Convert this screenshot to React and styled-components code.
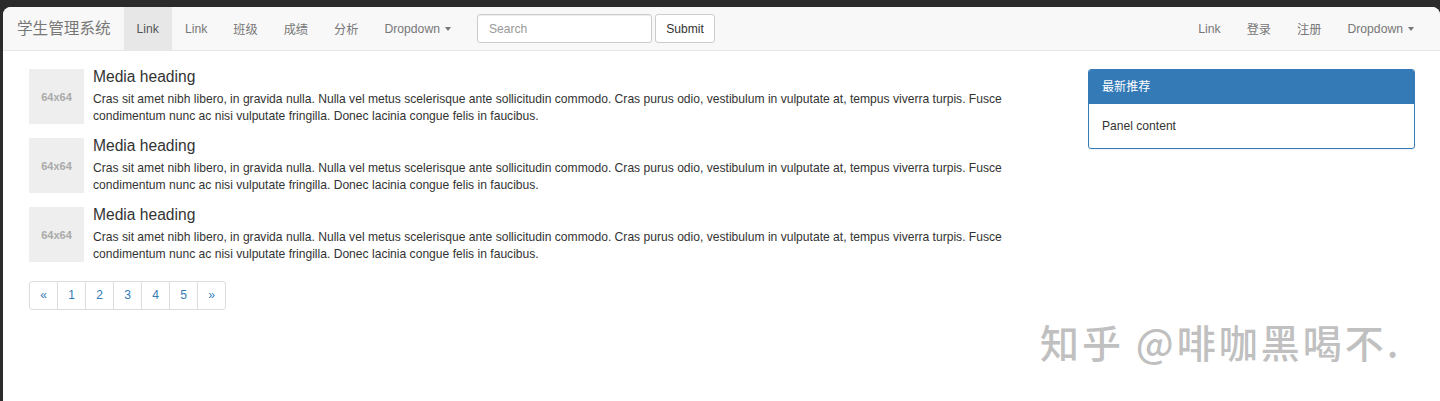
import { createGlobalStyle, styled } from "styled-components";

const GlobalStyle = createGlobalStyle`
    html, body {
        margin: 0;
        padding: 0;
        background: #2b2b2b;
        height: 401px;
        overflow: hidden;
    }
    * {
        box-sizing: border-box;
    }
`

const FONT = `"Liberation Sans", Arial, "Noto Sans CJK SC", sans-serif`

const leftLinks = [
    { label: 'Link', active: true },
    { label: 'Link' },
    { label: '班级' },
    { label: '成绩' },
    { label: '分析' },
]

const rightLinks = ['Link', '登录', '注册']

const mediaItems = [1, 2, 3]

const pages = ['«', '1', '2', '3', '4', '5', '»']

export default function App() {
    return (
        <Frame>
            <GlobalStyle />
            <Window>
                <Navbar>
                    <Brand>学生管理系统</Brand>
                    <NavList>
                        {leftLinks.map((item, i) => (
                            <NavItem key={i} $active={item.active}>{item.label}</NavItem>
                        ))}
                        <NavItem>Dropdown <Caret /></NavItem>
                    </NavList>
                    <SearchForm>
                        <SearchInput placeholder="Search" />
                        <SubmitButton type="button">Submit</SubmitButton>
                    </SearchForm>
                    <NavList $right>
                        {rightLinks.map(label => <NavItem key={label}>{label}</NavItem>)}
                        <NavItem>Dropdown <Caret /></NavItem>
                    </NavList>
                </Navbar>
                <Content>
                    <MainColumn>
                        {mediaItems.map(n => (
                            <Media key={n}>
                                <Thumb>64x64</Thumb>
                                <MediaBody>
                                    <MediaHeading>Media heading</MediaHeading>
                                    <p>Cras sit amet nibh libero, in gravida nulla. Nulla vel metus scelerisque ante sollicitudin commodo. Cras purus odio, vestibulum in vulputate at, tempus viverra turpis. Fusce condimentum nunc ac nisi vulputate fringilla. Donec lacinia congue felis in faucibus.</p>
                                </MediaBody>
                            </Media>
                        ))}
                        <Pagination>
                            {pages.map((p, i) => (
                                <PageLink key={i} $first={i === 0} $last={i === pages.length - 1}>{p}</PageLink>
                            ))}
                        </Pagination>
                    </MainColumn>
                    <SideColumn>
                        <Panel>
                            <PanelHeading>最新推荐</PanelHeading>
                            <PanelBody>Panel content</PanelBody>
                        </Panel>
                    </SideColumn>
                </Content>
                <Watermark>知乎 @啡咖黑喝不.</Watermark>
            </Window>
        </Frame>
    )
}

const Frame = styled.div`
    height: 401px;
    padding: 7px 0 0 3px;
    font-family: ${FONT};
`

const Window = styled.div`
    position: relative;
    height: 100%;
    background: #ffffff;
    border-radius: 8px 8px 0 0;
    overflow: hidden;
`

const Navbar = styled.nav`
    display: flex;
    align-items: center;
    height: 44px;
    background: #f8f8f8;
    border-bottom: 1px solid #e7e7e7;
    padding: 0 13px 0 0;
`

const Brand = styled.div`
    padding: 0 13px 0 14px;
    font-size: 15.6px;
    line-height: 43px;
    color: #777777;
`

const NavList = styled.ul`
    display: flex;
    list-style: none;
    margin: 0;
    padding: 0;
    margin-left: ${p => p.$right ? 'auto' : '0'};
`

const NavItem = styled.li`
    display: flex;
    align-items: center;
    gap: 5px;
    height: 43px;
    padding: 0 13px;
    font-size: 12.2px;
    color: ${p => p.$active ? '#555555' : '#777777'};
    background: ${p => p.$active ? '#e7e7e7' : 'transparent'};
`

const Caret = styled.span`
    display: inline-block;
    width: 0;
    height: 0;
    border-top: 4px solid #777777;
    border-left: 3.5px solid transparent;
    border-right: 3.5px solid transparent;
`

const SearchForm = styled.form`
    display: flex;
    gap: 3px;
    margin: 0;
    padding: 0 13px;
`

const SearchInput = styled.input`
    width: 175px;
    height: 29px;
    padding: 5px 11px;
    font-family: ${FONT};
    font-size: 12.1px;
    color: #555555;
    border: 1px solid #cccccc;
    border-radius: 3px;
    box-shadow: inset 0 1px 1px rgba(0, 0, 0, 0.075);
    &::placeholder {
        color: #999999;
    }
`

const SubmitButton = styled.button`
    width: 60px;
    height: 29px;
    font-family: ${FONT};
    font-size: 12.1px;
    color: #333333;
    background: #ffffff;
    border: 1px solid #cccccc;
    border-radius: 3px;
`

const Content = styled.div`
    display: flex;
    gap: 26px;
    padding: 18px 25px 0 26px;
`

const MainColumn = styled.div`
    flex: 1;
    p {
        margin: 0;
        font-size: 12.1px;
        line-height: 17px;
        color: #333333;
    }
`

const SideColumn = styled.div`
    width: 327px;
`

const Media = styled.div`
    display: flex;
    gap: 9px;
    & + & {
        margin-top: 13px;
    }
`

const Thumb = styled.div`
    flex: none;
    display: flex;
    align-items: center;
    justify-content: center;
    width: 55px;
    height: 55px;
    background: #eeeeee;
    color: #aaaaaa;
    font-size: 11px;
    font-weight: bold;
`

const MediaBody = styled.div`
    flex: 1;
`

const MediaHeading = styled.h4`
    margin: -1px 0 5px;
    font-size: 15.6px;
    font-weight: normal;
    line-height: 18px;
    color: #333333;
`

const Pagination = styled.div`
    display: inline-flex;
    margin-top: 18px;
`

const PageLink = styled.a`
    display: block;
    width: 29px;
    padding: 5px 0;
    text-align: center;
    font-size: 12.1px;
    line-height: 17px;
    color: #337ab7;
    background: #ffffff;
    border: 1px solid #dddddd;
    margin-left: ${p => p.$first ? '0' : '-1px'};
    border-radius: ${p => p.$first ? '3px 0 0 3px' : p.$last ? '0 3px 3px 0' : '0'};
`

const Panel = styled.div`
    border: 1px solid #337ab7;
    border-radius: 3px;
    box-shadow: 0 1px 1px rgba(0, 0, 0, 0.05);
    overflow: hidden;
`

const PanelHeading = styled.div`
    padding: 9px 13px;
    font-size: 12.1px;
    line-height: 16px;
    color: #ffffff;
    background: #337ab7;
`

const PanelBody = styled.div`
    padding: 14px 13px 13px;
    font-size: 12.1px;
    line-height: 17px;
    color: #333333;
`

const Watermark = styled.div`
    position: absolute;
    left: 1037px;
    top: 306px;
    font-family: "Noto Sans CJK SC", sans-serif;
    font-size: 39px;
    font-weight: 500;
    letter-spacing: 3px;
    color: rgba(175, 175, 175, 0.8);
    white-space: nowrap;
`
